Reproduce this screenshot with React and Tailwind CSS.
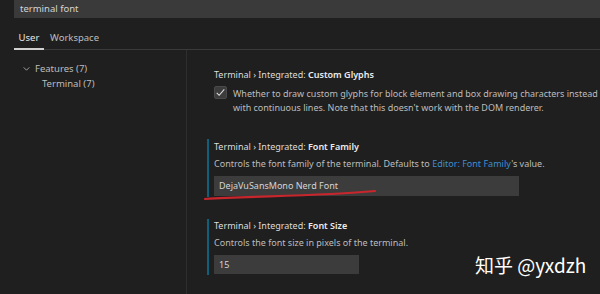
export default function App() {
  return (
    <div
      className="relative w-[600px] h-[294px] overflow-hidden bg-[#1f1f1f] text-[#cccccc] text-[9px] leading-[14px]"
      style={{ fontFamily: '"Noto Sans", "Noto Sans CJK SC", sans-serif' }}
    >
      {/* search box */}
      <div className="ml-[14px] h-[18px] bg-[#3a3a3a] pl-[6px] flex items-center text-[9.5px] text-[#d4d4d4]">
        terminal font
      </div>

      {/* tabs */}
      <div className="ml-[14px] h-[32px] flex items-end border-b border-[#3a3a3a] text-[9.5px]">
        <div className="w-[30px] h-full flex items-center justify-center text-[#e7e7e7] border-b-2 border-[#d0d0d0] mb-[-1px] pt-[8px]">
          User
        </div>
        <div className="h-full flex items-center pl-[6px] pt-[8px] text-[#bdbdbd]">Workspace</div>
      </div>

      <div className="flex h-[244px]">
        {/* tree */}
        <div className="w-[187px] shrink-0 border-r border-[#2e2e2e] pt-[11px] text-[#bdbdbd] text-[9.5px]">
          <div className="flex items-center h-[15px] pl-[22px]">
            <svg width="9" height="9" viewBox="0 0 16 16" className="mr-[4px]">
              <path d="M3 6l5 5 5-5" fill="none" stroke="#bdbdbd" strokeWidth="1.4" />
            </svg>
            Features (7)
          </div>
          <div className="h-[15px] flex items-center pl-[42px]">Terminal (7)</div>
        </div>

        {/* settings */}
        <div className="flex-1 min-w-0 pl-[20px] pt-[18px]">
          <div className="pl-[7px]">
            <div className="font-semibold text-[#ececec]">
              <span className="font-normal text-[#dcdcdc]">Terminal › Integrated: </span>Custom Glyphs
            </div>
            <div className="flex mt-[5px]">
              <div className="w-[13px] h-[13px] bg-[#3c3c3c] border border-[#4a4a4a] rounded-[2px] flex items-center justify-center mt-[-1px] shrink-0">
                <svg width="11" height="11" viewBox="0 0 16 16">
                  <path d="M2.5 8.5l3.5 3.5 7.5-8.5" fill="none" stroke="#e0e0e0" strokeWidth="1.5" />
                </svg>
              </div>
              <div className="pl-[6px] text-[#bdbdbd] whitespace-nowrap">
                Whether to draw custom glyphs for block element and box drawing characters instead of
                <br />
                with continuous lines. Note that this doesn't work with the DOM renderer.
              </div>
            </div>
          </div>

          <div className="mt-[24px] border-l-2 border-[#11607b] pl-[5px] pt-[1px] pb-[1px]">
            <div className="font-semibold text-[#ececec]">
              <span className="font-normal text-[#dcdcdc]">Terminal › Integrated: </span>Font Family
            </div>
            <div className="mt-[3px] text-[#bdbdbd]">
              Controls the font family of the terminal. Defaults to{" "}
              <span className="text-[#3e8ed0]">Editor: Font Family</span>'s value.
            </div>
            <div className="mt-[5px] w-[305px] h-[20px] bg-[#3c3c3c] flex items-center pl-[5px] text-[#d4d4d4]">
              DejaVuSansMono Nerd Font
            </div>
          </div>

          <div className="mt-[22px] border-l-2 border-[#11607b] pl-[5px] pb-[1px]">
            <div className="font-semibold text-[#ececec]">
              <span className="font-normal text-[#dcdcdc]">Terminal › Integrated: </span>Font Size
            </div>
            <div className="mt-[3px] text-[#bdbdbd]">Controls the font size in pixels of the terminal.</div>
            <div className="mt-[5px] w-[145px] h-[19px] bg-[#3c3c3c] flex items-center pl-[5px] text-[#d4d4d4]">
              15
            </div>
          </div>
        </div>
      </div>

      {/* red annotation */}
      <svg className="absolute left-0 top-0" width="600" height="294">
        <path
          d="M205 199 C 260 196, 320 196, 375 191"
          fill="none"
          stroke="#c8262c"
          strokeWidth="2.2"
          strokeLinecap="round"
        />
      </svg>

      {/* watermark */}
      <div
        className="absolute left-[475px] top-[253px] text-[19px] leading-[24px] text-white"
        style={{ fontFamily: '"Noto Sans CJK SC", sans-serif' }}
      >
        知乎 @yxdzh
      </div>
    </div>
  );
}
